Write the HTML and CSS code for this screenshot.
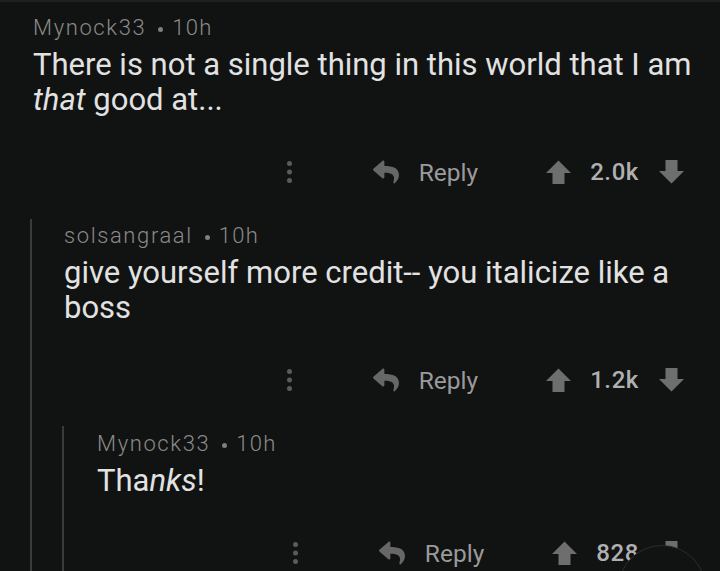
FILE: index.html
```html
<!DOCTYPE html>
<html lang="en">
<head>
<meta charset="utf-8">
<title>Comments</title>
<link rel="stylesheet" href="styles.css">
</head>
<body>
<div class="page">
  <div class="comment root">
    <div class="meta"><span class="author">Mynock33</span><span class="bullet"></span><span class="time">10h</span></div>
    <div class="text">There is not a single thing in this world that I am <em>that</em> good at...</div>
    <div class="actions">
      <svg class="more" width="5" height="22" viewBox="0 0 5 22"><circle cx="2.5" cy="2.5" r="2.5"/><circle cx="2.5" cy="11" r="2.5"/><circle cx="2.5" cy="19.5" r="2.5"/></svg>
      <svg class="reply-icon" width="26" height="26" viewBox="0 0 512 512"><path d="M8.3 189.8L184.3 37.9C199.7 24.5 224 35.3 224 56v80.1c160.6 1.8 288 34 288 186.3 0 61.4-39.6 122.3-83.3 154.1-13.7 9.9-33.1-2.5-28.1-18.6 45.3-145-21.5-183.5-176.6-185.7V360c0 20.7-24.3 31.5-39.7 18.2l-176-152c-11.1-9.6-11.1-26.8 0-36.4z"/></svg>
      <span class="reply">Reply</span>
      <svg class="vote up" width="25" height="24" viewBox="0 0 25 24"><path d="M12.5 0.5L25 13H18.5V24H6.5V13H0Z"/></svg>
      <span class="score">2.0k</span>
      <svg class="vote down" width="25" height="24" viewBox="0 0 25 24"><path d="M12.5 23.5L25 11H18.5V0H6.5V11H0Z"/></svg>
    </div>
  </div>

  <div class="thread level1">
    <div class="comment">
      <div class="meta"><span class="author">solsangraal</span><span class="bullet"></span><span class="time">10h</span></div>
      <div class="text">give yourself more credit-- you italicize like a boss</div>
      <div class="actions">
        <svg class="more" width="5" height="22" viewBox="0 0 5 22"><circle cx="2.5" cy="2.5" r="2.5"/><circle cx="2.5" cy="11" r="2.5"/><circle cx="2.5" cy="19.5" r="2.5"/></svg>
        <svg class="reply-icon" width="26" height="26" viewBox="0 0 512 512"><path d="M8.3 189.8L184.3 37.9C199.7 24.5 224 35.3 224 56v80.1c160.6 1.8 288 34 288 186.3 0 61.4-39.6 122.3-83.3 154.1-13.7 9.9-33.1-2.5-28.1-18.6 45.3-145-21.5-183.5-176.6-185.7V360c0 20.7-24.3 31.5-39.7 18.2l-176-152c-11.1-9.6-11.1-26.8 0-36.4z"/></svg>
        <span class="reply">Reply</span>
        <svg class="vote up" width="25" height="24" viewBox="0 0 25 24"><path d="M12.5 0.5L25 13H18.5V24H6.5V13H0Z"/></svg>
        <span class="score">1.2k</span>
        <svg class="vote down" width="25" height="24" viewBox="0 0 25 24"><path d="M12.5 23.5L25 11H18.5V0H6.5V11H0Z"/></svg>
      </div>
    </div>

    <div class="thread level2">
      <div class="comment">
        <div class="meta"><span class="author">Mynock33</span><span class="bullet"></span><span class="time">10h</span></div>
        <div class="text">Tha<em>nks</em>!</div>
        <div class="actions">
          <svg class="more" width="5" height="22" viewBox="0 0 5 22"><circle cx="2.5" cy="2.5" r="2.5"/><circle cx="2.5" cy="11" r="2.5"/><circle cx="2.5" cy="19.5" r="2.5"/></svg>
          <svg class="reply-icon" width="26" height="26" viewBox="0 0 512 512"><path d="M8.3 189.8L184.3 37.9C199.7 24.5 224 35.3 224 56v80.1c160.6 1.8 288 34 288 186.3 0 61.4-39.6 122.3-83.3 154.1-13.7 9.9-33.1-2.5-28.1-18.6 45.3-145-21.5-183.5-176.6-185.7V360c0 20.7-24.3 31.5-39.7 18.2l-176-152c-11.1-9.6-11.1-26.8 0-36.4z"/></svg>
          <span class="reply">Reply</span>
          <svg class="vote up" width="25" height="24" viewBox="0 0 25 24"><path d="M12.5 0.5L25 13H18.5V24H6.5V13H0Z"/></svg>
          <span class="score">828</span>
          <svg class="vote down" width="25" height="24" viewBox="0 0 25 24"><path d="M12.5 23.5L25 11H18.5V0H6.5V11H0Z"/></svg>
        </div>
      </div>
    </div>
  </div>

  <div class="fab"><span class="fab-dot a"></span><span class="fab-dot b"></span></div>
</div>
</body>
</html>
```
FILE: styles.css
```css
html, body {
  margin: 0;
  padding: 0;
  background: #111212;
}
body {
  height: 571px;
  overflow: hidden;
}
.page {
  position: relative;
  height: 569px;
  border-top: 2px solid #1e1f1f;
  font-family: Roboto, "Noto Sans", sans-serif;
  overflow: hidden;
}
.comment {
  padding-top: 3px;
}
.comment.root {
  padding-top: 12px;
  padding-left: 33px;
}
.meta {
  display: flex;
  align-items: center;
  height: 28px;
  line-height: 28px;
  font-size: 22px;
  font-weight: 300;
  letter-spacing: 1.6px;
  color: #8a8a8a;
}
.bullet {
  width: 5px;
  height: 5px;
  border-radius: 50%;
  background: #7e7e7e;
  margin: 2px 9px 0 12px;
}
.time {
  letter-spacing: 1.3px;
}
.text {
  margin-top: 5px;
  font-size: 31px;
  line-height: 35px;
  color: #e2e2e2;
}
.text em {
  font-style: italic;
}
.actions {
  display: flex;
  justify-content: flex-end;
  align-items: center;
  height: 40px;
  margin-top: 35px;
  padding-right: 36px;
}
.more {
  fill: #5b5b5b;
  margin-right: 81px;
}
.reply-icon {
  fill: #676767;
  margin-right: 20px;
}
.reply {
  font-size: 24.5px;
  color: #9a9a9a;
  margin-right: 68px;
}
.vote {
  fill: #6e6e6e;
}
.score {
  font-size: 24px;
  font-weight: 500;
  letter-spacing: 0.6px;
  color: #b0b0b0;
  margin: 0 20px 0 19px;
}
.thread {
  border-left: 2px solid #3a3a3a;
}
.thread.level1 {
  margin-top: 27px;
  margin-left: 30px;
  padding-left: 32px;
}
.thread.level2 {
  margin-top: 26px;
  margin-left: -2px;
  padding-left: 33px;
}
.thread.level2 .comment {
  padding-top: 4px;
}
.fab {
  position: absolute;
  left: 618px;
  top: 543px;
  width: 88px;
  height: 88px;
  border-radius: 50%;
  background: #111212;
  border: 1px solid #2c2c2c;
  box-sizing: border-box;
}
.fab-dot {
  position: absolute;
  top: 25px;
  width: 3px;
  height: 3px;
  background: #e8e8e8;
}
.fab-dot.a { left: 33px; }
.fab-dot.b { left: 58px; }
```
